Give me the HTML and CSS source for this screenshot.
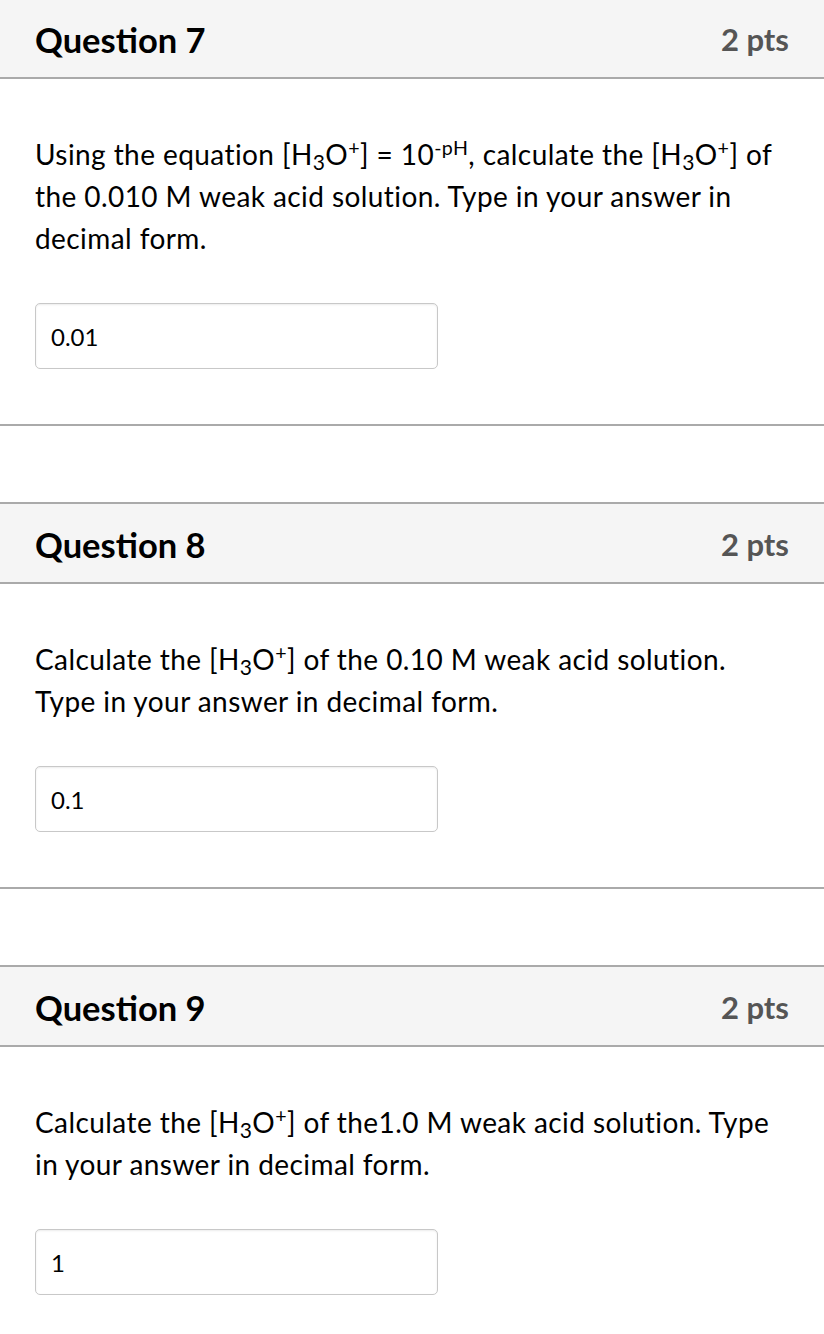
FILE: index.html
```html
<!DOCTYPE html>
<html lang="en">
<head>
<meta charset="utf-8">
<title>Quiz</title>
<link rel="stylesheet" href="styles.css">
</head>
<body>
<main class="quiz">
  <section class="question">
    <header class="q-header">
      <h2 class="q-title">Question 7</h2>
      <span class="q-points">2 pts</span>
    </header>
    <div class="q-body">
      <p class="q-text">Using the equation [H<sub>3</sub>O<sup>+</sup>] = 10<sup>-pH</sup>, calculate the [H<sub>3</sub>O<sup>+</sup>] of the 0.010 M weak acid solution. Type in your answer in decimal form.</p>
      <input class="q-input" type="text" value="0.01" readonly>
    </div>
  </section>
  <section class="question">
    <header class="q-header">
      <h2 class="q-title">Question 8</h2>
      <span class="q-points">2 pts</span>
    </header>
    <div class="q-body">
      <p class="q-text">Calculate the [H<sub>3</sub>O<sup>+</sup>] of the 0.10 M weak acid solution. Type in your answer in decimal form.</p>
      <input class="q-input" type="text" value="0.1" readonly>
    </div>
  </section>
  <section class="question">
    <header class="q-header">
      <h2 class="q-title">Question 9</h2>
      <span class="q-points">2 pts</span>
    </header>
    <div class="q-body">
      <p class="q-text">Calculate the [H<sub>3</sub>O<sup>+</sup>] of the1.0 M weak acid solution. Type in your answer in decimal form.</p>
      <input class="q-input" type="text" value="1" readonly>
    </div>
  </section>
</main>
</body>
</html>
```
FILE: styles.css
```css
html, body {
  margin: 0;
  padding: 0;
  background: #ffffff;
}
body {
  font-family: Lato, "Open Sans", "Liberation Sans", sans-serif;
  color: #000;
}
.quiz {
  margin-top: -3px;
}
.question {
  border-top: 2px solid #aaaaaa;
  border-bottom: 2px solid #aaaaaa;
  margin-bottom: 76px;
}
.q-header {
  display: flex;
  justify-content: space-between;
  align-items: center;
  background: #f5f5f5;
  border-bottom: 2px solid #aaaaaa;
  padding: 3px 35px 0 35px;
  height: 75px;
}
.q-title {
  margin: 0;
  font-size: 34.5px;
  font-weight: 700;
  line-height: 43px;
  color: #000;
}
.q-points {
  font-size: 31px;
  font-weight: 700;
  color: #555555;
  line-height: 43px;
}
.q-body {
  padding: 54px 35px 55px 35px;
}
.q-text {
  margin: 0 0 44px 0;
  font-size: 28px;
  letter-spacing: 0.42px;
  line-height: 42px;
  max-width: 744px;
}
.q-text sub,
.q-text sup {
  line-height: 0;
}
.q-text sub {
  font-size: 75%;
  vertical-align: -5px;
}
.q-text sup {
  font-size: 70%;
  vertical-align: 10px;
}
.q-input {
  display: block;
  box-sizing: border-box;
  width: 403px;
  height: 66px;
  margin: 0;
  padding: 0 15px;
  border: 1px solid #c8c8c8;
  border-radius: 5px;
  box-shadow: inset 0 1px 2px rgba(0, 0, 0, 0.08);
  background: #fff;
  font-family: Lato, "Open Sans", "Liberation Sans", sans-serif;
  font-size: 24px;
  color: #000;
  outline: none;
}
```
